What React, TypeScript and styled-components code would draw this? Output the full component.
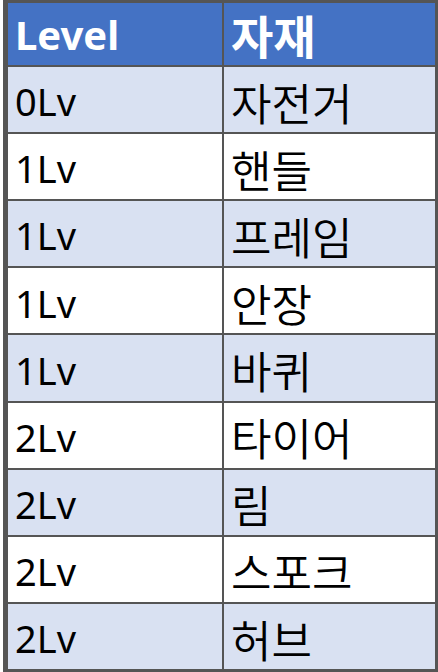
import React from 'react';
import styled, { createGlobalStyle } from 'styled-components';

const GlobalStyle = createGlobalStyle`
  html, body {
    margin: 0;
    padding: 0;
    background: #ffffff;
  }
  body {
    font-family: "Noto Sans", "Noto Sans CJK KR", sans-serif;
  }
`;

const Page = styled.div`
  width: 438px;
  height: 672px;
  padding-left: 3px;
  box-sizing: border-box;
`;

const Table = styled.div`
  height: 100%;
  box-sizing: border-box;
  display: grid;
  grid-template-columns: 214px 1fr;
  grid-template-rows: 62px repeat(9, 1fr);
  gap: 2px;
  background: #555555;
  border-style: solid;
  border-color: #555555;
  border-width: 3px 3px 3px 5px;
`;

const Cell = styled.div<{ $head?: boolean; $shade?: boolean; $wide?: boolean }>`
  display: flex;
  align-items: center;
  min-width: 0;
  padding-left: 7px;
  padding-top: ${(p) => (p.$head ? '2px' : '5px')};
  box-sizing: border-box;
  background: ${(p) => (p.$head ? '#4472c4' : p.$shade ? '#d9e1f2' : '#ffffff')};
  color: ${(p) => (p.$head ? '#ffffff' : '#000000')};
  font-weight: ${(p) => (p.$head ? 700 : p.$wide ? 350 : 400)};
  font-size: ${(p) => (p.$wide ? (p.$head ? '46px' : '44px') : p.$head ? '40px' : '38px')};
  font-family: ${(p) =>
    p.$wide ? '"Noto Sans CJK KR", sans-serif' : '"Noto Sans", "Noto Sans CJK KR", sans-serif'};
  line-height: 1.2;
  white-space: nowrap;
`;

const rows: [string, string][] = [
  ['0Lv', '자전거'],
  ['1Lv', '핸들'],
  ['1Lv', '프레임'],
  ['1Lv', '안장'],
  ['1Lv', '바퀴'],
  ['2Lv', '타이어'],
  ['2Lv', '림'],
  ['2Lv', '스포크'],
  ['2Lv', '허브'],
];

const App: React.FC = () => {
  return (
    <>
      <GlobalStyle />
      <Page>
        <Table>
          <Cell $head>Level</Cell>
          <Cell $head $wide>자재</Cell>
          {rows.map(([level, part], i) => (
            <React.Fragment key={i}>
              <Cell $shade={i % 2 === 0}>{level}</Cell>
              <Cell $shade={i % 2 === 0} $wide>{part}</Cell>
            </React.Fragment>
          ))}
        </Table>
      </Page>
    </>
  );
};

export default App;
